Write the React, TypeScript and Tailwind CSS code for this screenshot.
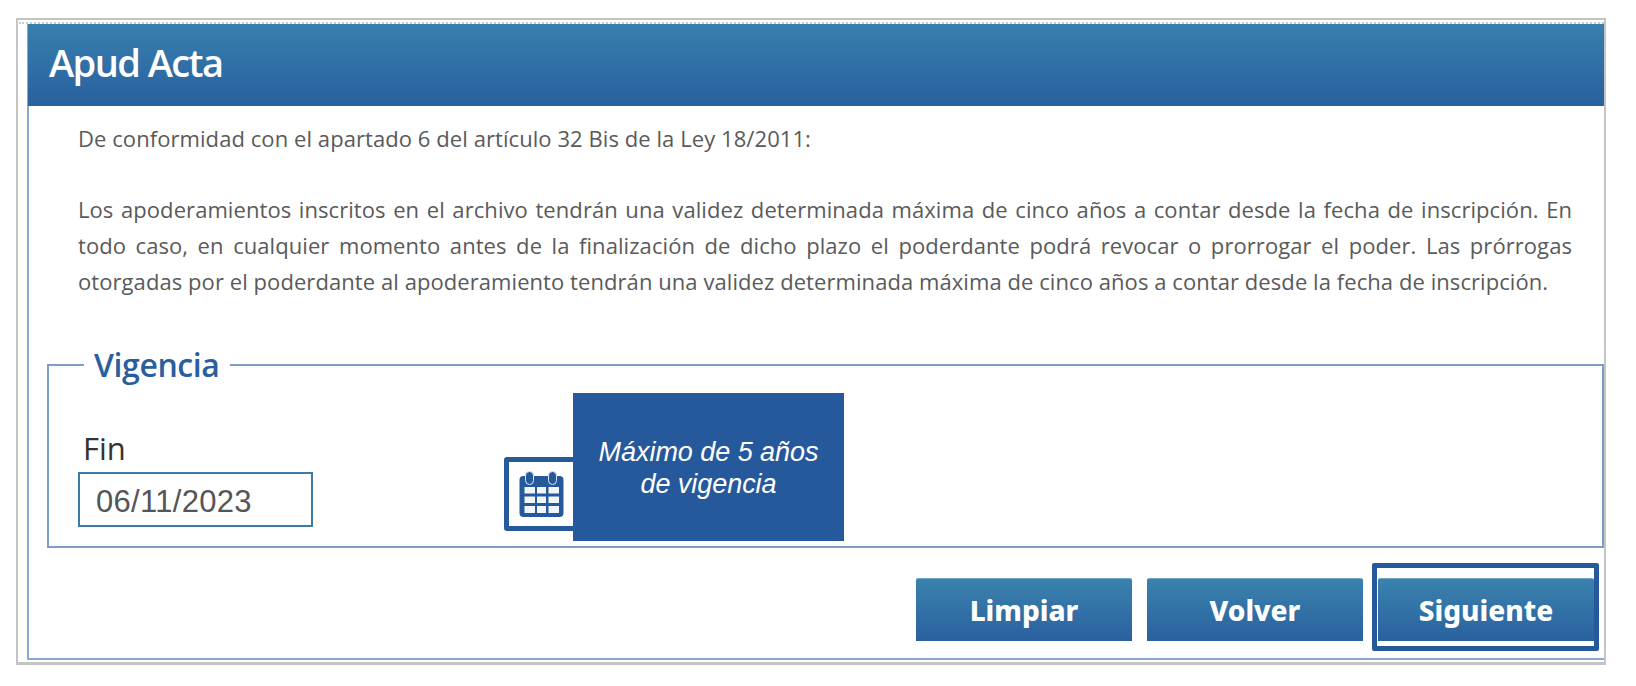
import React from "react";

function Btn({ label }: { label: string }) {
  return (
    <button className="w-[216px] h-[63px] rounded-t-[2px] bg-gradient-to-b from-[#3a82ad] to-[#2a619f] border-t border-[#6fa8c8] text-white text-[28px] font-extrabold font-['Noto_Sans',sans-serif]">
      {label}
    </button>
  );
}

function CalendarIcon() {
  return (
    <svg width="45" height="46" viewBox="0 0 44 46" className="block">
      <rect x="0" y="5" width="44" height="41" rx="4" fill="#26599c" />
      <rect x="6" y="0.5" width="8" height="13" rx="4" fill="#26599c" stroke="#dfe8f2" strokeWidth="1" />
      <rect x="29" y="0.5" width="8" height="13" rx="4" fill="#26599c" stroke="#dfe8f2" strokeWidth="1" />
      <g fill="#f2f5fa">
        <rect x="5" y="16" width="10.5" height="6.5" />
        <rect x="17.5" y="16" width="9" height="6.5" />
        <rect x="29" y="16" width="10.5" height="6.5" />
        <rect x="5" y="25.5" width="10.5" height="6.5" />
        <rect x="17.5" y="25.5" width="9" height="6.5" />
        <rect x="29" y="25.5" width="10.5" height="6.5" />
        <rect x="5" y="35" width="10.5" height="7" />
        <rect x="17.5" y="35" width="9" height="7" />
        <rect x="29" y="35" width="10.5" height="7" />
      </g>
    </svg>
  );
}

export default function App() {
  return (
    <div className="h-[686px] w-[1636px] bg-white pt-[18px] pl-[16px]">
      <div className="relative w-[1590px] h-[647px] border-2 border-[#c4c4c4] border-b-[3px] pl-[9px] pb-[2px]">
        <div className="h-[4px] -ml-[8px] border-b-2 border-dotted border-[#c9c9c9]" />
        <div className="h-[calc(100%-4px)] border-l-2 border-b-2 border-[#8aa8cf] flex flex-col">
          <div className="h-[82px] shrink-0 -ml-[1px] bg-gradient-to-b from-[#387fae] to-[#28619f] border-b border-[#2a619f] flex items-center pl-[21px] pb-[4px] text-white text-[38px] font-semibold font-['Open_Sans',sans-serif] tracking-[-1.55px]">
            Apud Acta
          </div>
          <div className="pl-[49px] pr-[32px] pt-[14px] text-[22px] leading-[36px] font-medium text-[#5a5a5a] font-['Open_Sans',sans-serif] tracking-[0.07px]">
            <p className="mb-[35px]">De conformidad con el apartado 6 del artículo 32 Bis de la Ley 18/2011:</p>
            <p className="text-justify">
              Los apoderamientos inscritos en el archivo tendrán una validez determinada máxima de cinco años a contar desde la fecha de inscripción. En todo caso, en cualquier momento antes de la finalización de dicho plazo el poderdante podrá revocar o prorrogar el poder. Las prórrogas otorgadas por el poderdante al apoderamiento tendrán una validez determinada máxima de cinco años a contar desde la fecha de inscripción.
            </p>
          </div>
          <fieldset className="relative mt-[49px] ml-[18px] h-[200px] shrink-0 border-2 border-[#7d9cc8] pl-[30px] pt-[48px]">
            <legend className="ml-[5px] px-[10px] text-[32px] leading-[34px] font-semibold text-[#2a5f9f] font-['Open_Sans',sans-serif] tracking-[-0.4px]">
              Vigencia
            </legend>
            <div className="text-[31px] leading-[36px] text-[#333] font-['Open_Sans',sans-serif] pl-[4px]">Fin</div>
            <div className="mt-[6px] -ml-[1px] w-[235px] h-[55px] border-2 border-[#3a7ca5] pl-[16px] pt-[6px] flex items-center text-[31px] tracking-[0.3px] text-[#555] font-['Liberation_Sans',sans-serif]">
              06/11/2023
            </div>
          </fieldset>
          <div className="flex justify-end gap-[15px] pr-[10px] pt-[30px]">
            <Btn label="Limpiar" />
            <Btn label="Volver" />
            <Btn label="Siguiente" />
          </div>
        </div>

        <div className="absolute left-[486px] top-[437px] w-[99px] h-[74px] border-[5px] border-[#26599c] rounded-[3px] bg-white flex items-center pl-[10px]">
          <CalendarIcon />
        </div>
        <div className="absolute left-[555px] top-[373px] w-[271px] h-[148px] pt-[2px] bg-[#26599c] flex items-center justify-center text-center text-white italic text-[27px] leading-[32px] tracking-[-0.05px] font-['Liberation_Sans',sans-serif]">
          <span>Máximo de 5 años<br />de vigencia</span>
        </div>
        <div className="absolute left-[1354px] top-[543px] w-[227px] h-[88px] border-[5px] border-[#26599c] rounded-[2px]" />
      </div>
    </div>
  );
}
